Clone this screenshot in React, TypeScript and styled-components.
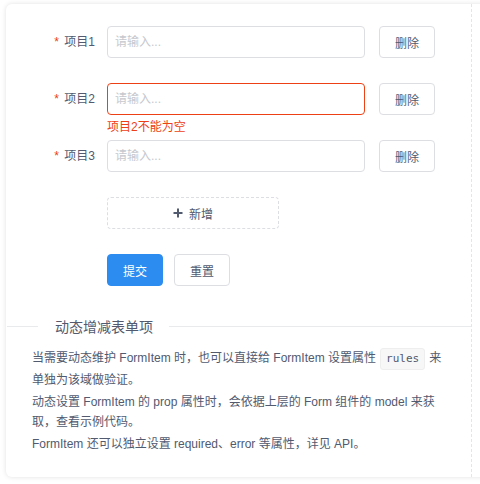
import React from 'react';
import styled, { createGlobalStyle } from 'styled-components';

const GlobalStyle = createGlobalStyle`
  html, body {
    margin: 0;
    padding: 0;
    background: #fff;
    overflow: hidden;
  }
  body {
    font-family: "Liberation Sans", "Noto Sans CJK SC", sans-serif;
    font-size: 12px;
    color: #515a6e;
  }
`;

const Page = styled.div`
  width: 100vw;
  height: 100vh;
  overflow: hidden;
  padding: 4px 0 0 6px;
  box-sizing: border-box;
`;

const Card = styled.div`
  width: 520px;
  height: 473px;
  border-radius: 6px;
  box-shadow: 0 0 5px rgba(0, 0, 0, 0.12);
  display: flex;
  background: #fff;
  box-sizing: border-box;
`;

const DemoCol = styled.div`
  width: 466px;
  border-right: 1px dashed #e3e5e8;
  box-sizing: border-box;
  display: flex;
  flex-direction: column;
`;

const FormArea = styled.div`
  padding: 22px 0 0 21px;
`;

const FormItem = styled.div`
  display: flex;
  position: relative;
  height: 32px;
  margin-bottom: 25px;
`;

const Label = styled.label`
  width: 80px;
  height: 32px;
  box-sizing: border-box;
  padding-right: 12px;
  text-align: right;
  line-height: 32px;
  font-size: 12px;
  color: #515a6e;
  white-space: nowrap;
`;

const Star = styled.span`
  color: #ed4014;
  margin-right: 4px;
  font-family: "Liberation Mono", monospace;
`;

const Content = styled.div`
  display: flex;
  align-items: center;
  position: relative;
  height: 32px;
`;

const InputWrap = styled.div`
  position: relative;
  height: 32px;
`;

const Input = styled.input<{ $error?: boolean }>`
  display: block;
  width: 258px;
  height: 32px;
  box-sizing: border-box;
  padding: 4px 7px;
  border: 1px solid ${(p) => (p.$error ? '#ed4014' : '#dcdee2')};
  border-radius: 4px;
  font-family: inherit;
  font-size: 12px;
  color: #515a6e;
  outline: none;
  background: #fff;
  &::placeholder {
    color: #c5c8ce;
  }
`;

const ErrorTip = styled.div`
  position: absolute;
  top: 100%;
  left: 0;
  padding-top: 6px;
  line-height: 1;
  font-size: 12px;
  color: #ed4014;
  white-space: nowrap;
`;

const Button = styled.button<{ $primary?: boolean; $dashed?: boolean; $width?: number }>`
  height: 32px;
  width: ${(p) => (p.$width ? `${p.$width}px` : 'auto')};
  padding: 0 15px;
  box-sizing: border-box;
  border-radius: 4px;
  border: 1px ${(p) => (p.$dashed ? 'dashed' : 'solid')} ${(p) => (p.$primary ? '#2d8cf0' : '#dcdee2')};
  background: ${(p) => (p.$primary ? '#2d8cf0' : '#fff')};
  color: ${(p) => (p.$primary ? '#fff' : '#515a6e')};
  font-family: inherit;
  font-size: 12px;
  display: inline-flex;
  align-items: center;
  justify-content: center;
  gap: 6px;
  cursor: pointer;
`;

const DeleteButton = styled(Button)`
  margin-left: 14px;
  width: 56px;
`;

const ResetButton = styled(Button)`
  margin-left: 11px;
`;

const Desc = styled.div`
  margin-top: 4px;
`;

const Divider = styled.div`
  display: flex;
  align-items: center;
  height: 22px;
  padding-left: 1px;
`;

const DividerLine = styled.div<{ $grow?: boolean }>`
  height: 1px;
  background: #e8eaec;
  width: 31px;
  flex: ${(p) => (p.$grow ? 1 : 'none')};
`;

const DividerTitle = styled.span`
  margin: 0 16px 0 17px;
  font-size: 14px;
  color: #515a6e;
`;

const DescBody = styled.div`
  padding: 11px 18px 0 26px;
`;

const Para = styled.p`
  margin: 0 0 2px;
  line-height: 20px;
  font-size: 12px;
  color: #515a6e;
`;

const Code = styled.code`
  display: inline-block;
  margin: 0 4px;
  padding: 0 5px;
  height: 22px;
  line-height: 20px;
  box-sizing: border-box;
  background: #f7f7f7;
  border: 1px solid #eee;
  border-radius: 3px;
  font-family: "DejaVu Sans Mono", "Liberation Mono", monospace;
  font-size: 11px;
  color: #515a6e;
  vertical-align: middle;
`;

const PlusIcon = () => (
  <svg width="10" height="10" viewBox="0 0 10 10">
    <path d="M5 0.5V9.5M0.5 5H9.5" stroke="#515a6e" strokeWidth="2" />
  </svg>
);

const items = [
  { label: '项目1', error: '' },
  { label: '项目2', error: '项目2不能为空' },
  { label: '项目3', error: '' },
];

const App: React.FC = () => {
  return (
    <>
      <GlobalStyle />
      <Page>
        <Card>
          <DemoCol>
            <FormArea>
              {items.map((item) => (
                <FormItem key={item.label}>
                  <Label>
                    <Star>*</Star>
                    {item.label}
                  </Label>
                  <Content>
                    <InputWrap>
                      <Input $error={!!item.error} placeholder="请输入..." />
                      {item.error && <ErrorTip>{item.error}</ErrorTip>}
                    </InputWrap>
                    <DeleteButton>删除</DeleteButton>
                  </Content>
                </FormItem>
              ))}
              <FormItem>
                <Label />
                <Content>
                  <Button $dashed $width={172}>
                    <PlusIcon />
                    新增
                  </Button>
                </Content>
              </FormItem>
              <FormItem>
                <Label />
                <Content>
                  <Button $primary>提交</Button>
                  <ResetButton>重置</ResetButton>
                </Content>
              </FormItem>
            </FormArea>
            <Desc>
              <Divider>
                <DividerLine />
                <DividerTitle>动态增减表单项</DividerTitle>
                <DividerLine $grow />
              </Divider>
              <DescBody>
                <Para>
                  当需要动态维护 FormItem 时，也可以直接给 FormItem 设置属性<Code>rules</Code>来单独为该域做验证。
                </Para>
                <Para>
                  动态设置 FormItem 的 prop 属性时，会依据上层的 Form 组件的 model 来获取，查看示例代码。
                </Para>
                <Para>FormItem 还可以独立设置 required、error 等属性，详见 API。</Para>
              </DescBody>
            </Desc>
          </DemoCol>
        </Card>
      </Page>
    </>
  );
};

export default App;
